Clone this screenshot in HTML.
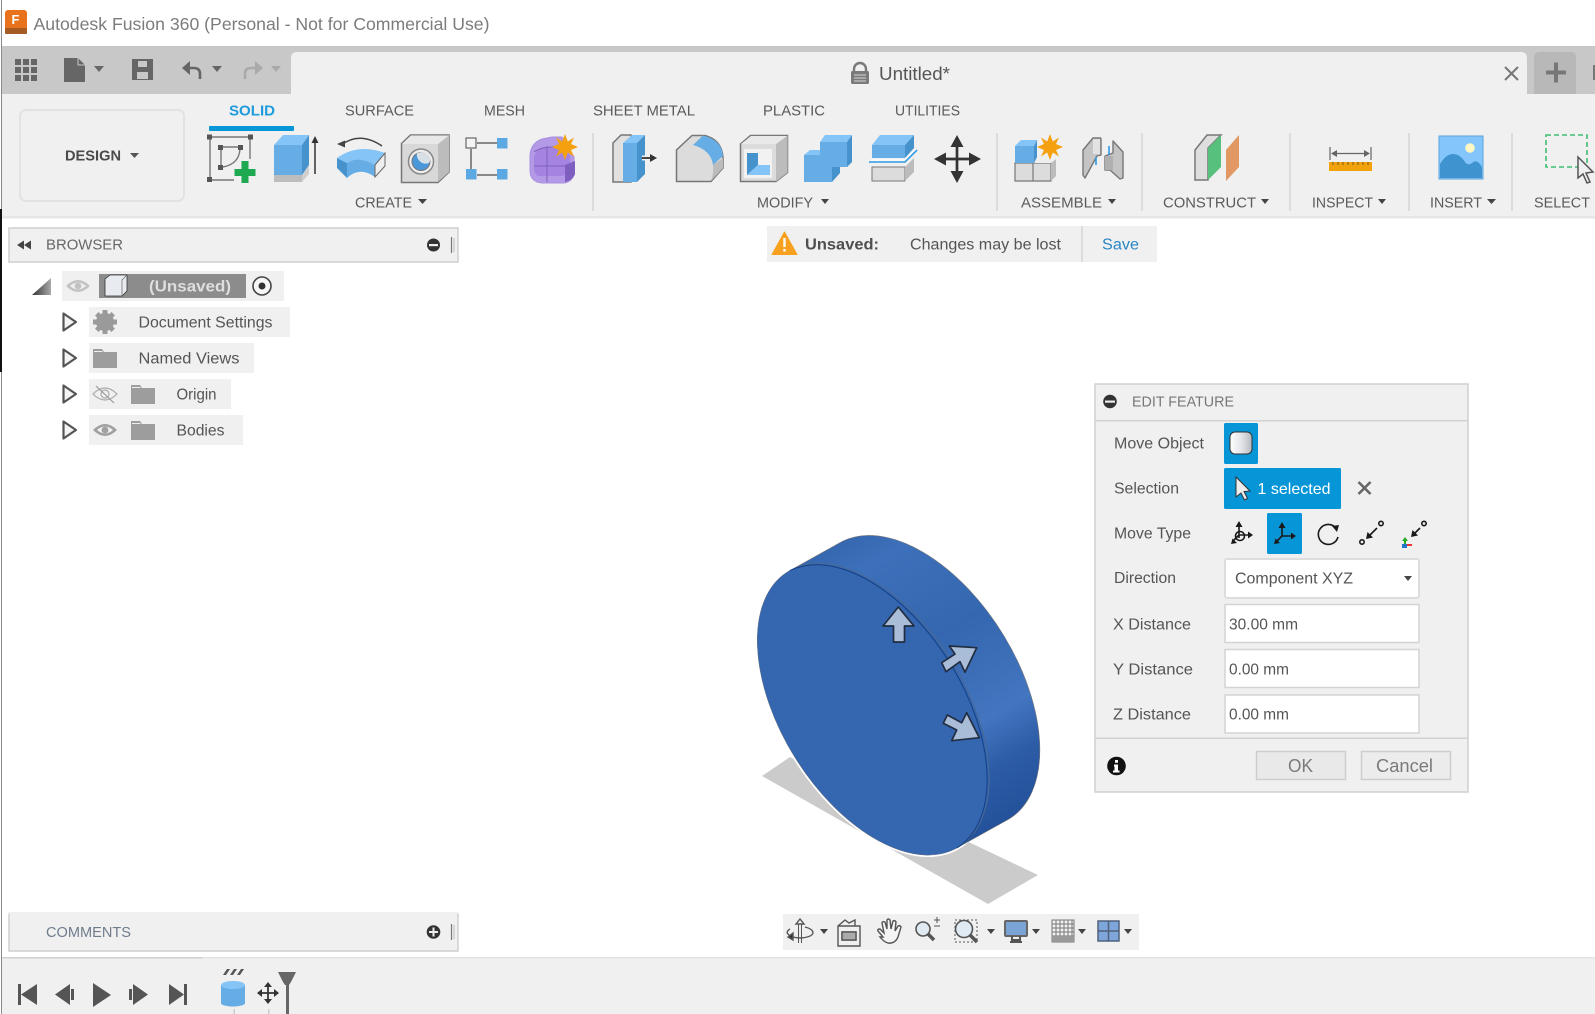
<!DOCTYPE html>
<html><head><meta charset="utf-8"><title>Autodesk Fusion 360</title>
<style>
html,body{margin:0;padding:0;background:#fff;width:1595px;height:1014px;overflow:hidden}
svg{display:block;filter:blur(.35px)}
text{font-family:"Liberation Sans",sans-serif;fill:#555;font-size:15px}
.r{font-size:15px;fill:#5a5a5a}
.l{font-size:15.5px;fill:#555}
</style></head><body>
<svg width="1595" height="1014" viewBox="0 0 1595 1014" xmlns="http://www.w3.org/2000/svg">
<defs>
<linearGradient id="side" gradientUnits="userSpaceOnUse" x1="845" y1="541" x2="1006" y2="820">
<stop offset="0" stop-color="#3568b0"/><stop offset=".1" stop-color="#3d70ba"/><stop offset=".4" stop-color="#3467af"/><stop offset=".7" stop-color="#4375c0"/><stop offset=".84" stop-color="#2d5ca6"/><stop offset="1" stop-color="#23529b"/>
</linearGradient>
<linearGradient id="cyl" x1="0" y1="0" x2="1" y2="0"><stop offset="0" stop-color="#fff"/><stop offset=".5" stop-color="#e4e6ea"/><stop offset="1" stop-color="#b5b9c0"/></linearGradient>
<linearGradient id="tri" x1="0" y1="0" x2="1" y2="0"><stop offset="0" stop-color="#333"/><stop offset="1" stop-color="#aaa"/></linearGradient>
<g id="folder"><path d="M0,1h9l2,3h13v16H0z" fill="#9d9d9d"/><path d="M1,3h8l1,1H1z" fill="#eee"/></g>
<g id="eye"><path d="M0,9Q12,-3 24,9Q12,21 0,9z" fill="#a0a0a0"/><path d="M4,9Q12,2 20,9Q12,16 4,9z" fill="#f0f0f0"/><circle cx="12" cy="9" r="3.4" fill="#a0a0a0"/></g>
<path id="tr" d="M1.5,1.5L14,10L1.5,18.5z" fill="#f4f4f4" stroke="#555" stroke-width="2.2" stroke-linejoin="round"/>
<path id="star" d="M0,-13L2.8,-5.5L9,-9.5L6,-3L13,0L6,3L9,9.5L2.8,5.5L0,13L-2.8,5.5L-9,9.5L-6,3L-13,0L-6,-3L-9,-9.5L-2.8,-5.5z" fill="#f5a00f"/>
</defs>
<rect width="1595" height="1014" fill="#fff"/>

<!-- title -->
<rect x="5" y="10" width="22" height="24" rx="3" fill="#e9721c"/>
<rect x="5" y="28" width="22" height="6" rx="1" fill="#a65a24"/>
<text x="11.5" y="24" style="font-size:13px;font-weight:bold;fill:#fff">F</text>
<text x="33.5" y="30" textLength="456" lengthAdjust="spacingAndGlyphs" style="font-size:17.5px;fill:#7c7c7c">Autodesk Fusion 360 (Personal - Not for Commercial Use)</text>

<!-- top band -->
<rect x="2" y="46" width="1593" height="48" fill="#c8c8c8"/>
<path d="M2,94H1595V216H2z" fill="#f0f0f0"/>
<path d="M291,94V58q0-6 6-6H1521q6,0 6,6V94z" fill="#f0f0f0"/>
<path d="M1534,94V58q0-6 6-6h30q6,0 6,6V94z" fill="#b8b8b8"/>
<path d="M1593,65h2v15h-2z" fill="#777"/>
<path d="M1546,70.5h20v4h-20zM1554,62.5h4v20h-4z" fill="#777"/>
<path d="M1505,67L1518,80M1518,67L1505,80" stroke="#777" stroke-width="2"/>
<rect x="0" y="216" width="1595" height="2.5" fill="#e6e6e6"/>
<!-- left edge -->
<rect x="1" y="0" width="1" height="1014" fill="#8a8a8a"/>
<rect x="0" y="209" width="2" height="163" fill="#111"/>

<!-- quick access -->
<g fill="#666">
<path d="M15,59h6v6h-6zM23,59h6v6h-6zM31,59h6v6h-6zM15,67h6v6h-6zM23,67h6v6h-6zM31,67h6v6h-6zM15,75h6v6h-6zM23,75h6v6h-6zM31,75h6v6h-6z"/>
<path d="M64,58h14l7,7v17H64z"/>
<path d="M94,66h10l-5,6z"/>
<path fill-rule="evenodd" d="M132,59h21v21h-21zM138,61v6h9v-6zM137,72v7h11v-7z"/>
<path d="M212,66h10l-5,6z"/>
<path d="M271,66h10l-5,6z" fill="#aaa"/>
</g>
<path d="M78,58v7h7" fill="none" stroke="#c8c8c8" stroke-width="1"/>
<path d="M182,68l8-7v14z" fill="#666"/><path d="M189,68h5q6,0 6,6v5" fill="none" stroke="#666" stroke-width="2.6"/>
<path d="M263,68l-8-7v14z" fill="#aaa"/><path d="M256,68h-5q-6,0-6,6v5" fill="none" stroke="#aaa" stroke-width="2.6"/>

<!-- document -->
<path d="M854,72v-3a6,6 0 0 1 12,0v3" fill="none" stroke="#7a7a7a" stroke-width="2.4"/>
<rect x="851" y="71" width="18" height="13" rx="1.5" fill="#7a7a7a"/>
<path d="M854,75h12M854,78h12M854,81h12" stroke="#d8d8d8"/>
<text x="879" y="80" textLength="71" lengthAdjust="spacingAndGlyphs" style="font-size:18px;fill:#555">Untitled*</text>

<!-- design -->
<rect x="20" y="110" width="164" height="91" rx="6" fill="#f0f0f0" stroke="#e2e2e2" stroke-width="2"/>
<text x="65" y="160.500" textLength="56" lengthAdjust="spacingAndGlyphs" style="font-size:15px;font-weight:bold;fill:#4a4a4a">DESIGN</text>
<path d="M130,153h9l-4.500,5z" fill="#555"/>

<!-- tabs -->
<text x="229" y="115.500" textLength="46" lengthAdjust="spacingAndGlyphs" style="font-size:15px;fill:#1d9bdc;font-weight:bold">SOLID</text>
<rect x="209" y="126" width="85" height="5" rx="1" fill="#0696d7"/>
<text class="r" x="345" y="115.500" textLength="69" lengthAdjust="spacingAndGlyphs">SURFACE</text>
<text class="r" x="484" y="115.500" textLength="41" lengthAdjust="spacingAndGlyphs">MESH</text>
<text class="r" x="593" y="115.500" textLength="102" lengthAdjust="spacingAndGlyphs">SHEET METAL</text>
<text class="r" x="763" y="115.500" textLength="62" lengthAdjust="spacingAndGlyphs">PLASTIC</text>
<text class="r" x="895" y="115.500" textLength="65" lengthAdjust="spacingAndGlyphs">UTILITIES</text>

<!-- separators -->
<g fill="#dcdcdc"><rect x="592" y="133" width="2" height="78"/><rect x="996" y="133" width="2" height="78"/><rect x="1141" y="133" width="2" height="78"/><rect x="1289" y="133" width="2" height="78"/><rect x="1408" y="133" width="2" height="78"/><rect x="1511" y="133" width="2" height="78"/></g>

<!-- labels -->
<text class="r" x="355" y="207.500" textLength="57" lengthAdjust="spacingAndGlyphs">CREATE</text><path d="M418,199h9l-4.500,5z" fill="#444"/>
<text class="r" x="757" y="207.500" textLength="56" lengthAdjust="spacingAndGlyphs">MODIFY</text><path d="M821,199h8l-4,5z" fill="#444"/>
<text class="r" x="1021" y="207.500" textLength="81" lengthAdjust="spacingAndGlyphs">ASSEMBLE</text><path d="M1108,199h8l-4,5z" fill="#444"/>
<text class="r" x="1163" y="207.500" textLength="93" lengthAdjust="spacingAndGlyphs">CONSTRUCT</text><path d="M1261,199h8l-4,5z" fill="#444"/>
<text class="r" x="1312" y="207.500" textLength="61" lengthAdjust="spacingAndGlyphs">INSPECT</text><path d="M1378,199h8l-4,5z" fill="#444"/>
<text class="r" x="1430" y="207.500" textLength="52" lengthAdjust="spacingAndGlyphs">INSERT</text><path d="M1487,199h9l-4.500,5z" fill="#444"/>
<text class="r" x="1534" y="207.500" textLength="56" lengthAdjust="spacingAndGlyphs">SELECT</text>

<!-- sketch -->
<g>
<path d="M210,137h40M250,137v22M210,137v43M210,180h24M221,147h19M221,147v20M240,149q-1,15-17,18" fill="none" stroke="#777" stroke-width="1.400"/>
<path d="M207,134.500h5v5h-5zM248,134.500h5v5h-5zM207,177h5v5h-5zM218,145h5v5h-5zM238,145h5v5h-5zM218,165h5v5h-5z" fill="#555"/>
<path d="M241.500,161h7v8h7v7h-7v7h-7v-7h-7v-7h7z" fill="#1ea84f"/>
</g>
<!-- extrude -->
<path d="M274,145l9-10h26l-7,10z" fill="#84c4f7"/>
<path d="M274,145h28v30h-28z" fill="#65ade4"/>
<path d="M302,145l7-10v30l-7,10z" fill="#4592cd"/>
<path d="M274,175h28v7h-28z" fill="#bdbdbd"/><path d="M302,175l7-10v9l-7,8z" fill="#cfcfcf"/>
<path d="M315,140v34" stroke="#333" stroke-width="1.500"/><path d="M311.500,143l3.500-7 3.500,7z" fill="#333"/>
<!-- revolve -->
<path d="M341,145Q360,131 382,146" fill="none" stroke="#444" stroke-width="1.500"/><path d="M337,144l8-3.500 0,7z" fill="#444"/>
<path d="M337,158Q358,143 385,153L375,165Q358,155 347,163z" fill="#84c4f7"/>
<path d="M347,163Q358,155 375,165V177Q360,166 347,178z" fill="#65ade4"/>
<path d="M337,158l10,5v15L337,168z" fill="#4592cd"/>
<path d="M375,165l10-12v13l-10,11z" fill="#eee" stroke="#666"/>
<!-- hole -->
<path d="M401.500,143.500l9-8.500h38.500v37l-11,10.500h-36.500z" fill="#d8d8d8" stroke="#777" stroke-width="1.500"/>
<path d="M438,144l11-9v37l-11,10z" fill="#bcbcbc"/><path d="M402,144l9-8.500h38l-11,8.500z" fill="#e8e8e8"/>
<circle cx="421" cy="161.500" r="12.500" fill="#eee" stroke="#888" stroke-width="1.500"/>
<circle cx="421" cy="161.500" r="9" fill="#4a98d9" stroke="#777"/>
<path d="M417,153a9,9 0 0 0 12,10a9,9 0 0 0-2-12z" fill="#e8e8e8" opacity=".9"/>
<!-- pattern -->
<path d="M477,143h20M471,149v21M477,175h20" stroke="#666" stroke-width="1.500"/>
<rect x="466" y="138" width="10" height="10" fill="#f4f4f4" stroke="#666" stroke-width="1.200"/>
<rect x="497" y="138" width="10.500" height="10.500" fill="#5ba8e2"/><rect x="466" y="169" width="10.500" height="10.500" fill="#5ba8e2"/><rect x="497" y="169" width="10.500" height="10.500" fill="#5ba8e2"/>
<!-- create form -->
<path d="M530,155q1-12 12-16l10-2h10l12,20v17q-2,8-10,9h-22q-12-1-12-13z" fill="#b49ae6" stroke="#a98fe0"/>
<path d="M534,157q2-9 12-10h16l8,8v12q-2,9-10,9h-22q-4-2-4-8z" fill="#a484e0"/>
<path d="M565,165l10-4v13q-2,6-10,8z" fill="#7e5fc0"/><path d="M534,166h32M547,146v36M534,152q8-6 26-5" stroke="#7c62b8" stroke-width="1" fill="none"/>
<use href="#star" transform="translate(565,147)"/>
<!-- press pull -->
<path d="M613,182v-39l8-8h10v47z" fill="#e0e0e0" stroke="#777" stroke-width="1.500"/>
<path d="M623,143l9-8h13l-8,8z" fill="#84c4f7"/><path d="M623,143h14v39h-14z" fill="#65ade4"/><path d="M637,143l8-8v39l-8,8z" fill="#4592cd"/>
<path d="M642,158h10" stroke="#f0f0f0" stroke-width="5"/><path d="M642,158h10" stroke="#333" stroke-width="1.800"/><path d="M650,154l7,4-7,4z" fill="#333"/>
<!-- fillet -->
<path d="M676.500,181.500V150L692,135.500h13Q722,140 723,158V168L711,181.500Z" fill="#dcdcdc" stroke="#777" stroke-width="1.500"/>
<path d="M711,181l12-13v-10l-10,7q1,8-2,16z" fill="#bcbcbc"/>
<path d="M693,145L703,135.500Q722,140 723,156L713,165Q711,150 693,145Z" fill="#65ade4"/>
<!-- shell -->
<path d="M740.500,181.500V144l10-8.500h37v37l-11.500,9z" fill="#dcdcdc" stroke="#777" stroke-width="1.500"/>
<path d="M776,144l11.500-8.500v37l-11.500,9z" fill="#bcbcbc"/><path d="M741,144l10-8h36l-11,8z" fill="#e9e9e9"/>
<rect x="744" y="149" width="28" height="29" fill="#f2f2f2"/>
<path d="M747,153h11v12l-11,10z" fill="#4592cd"/><path d="M747,175l11-10h12v10z" fill="#84c4f7"/>
<!-- combine -->
<path d="M820,142l5-7h27l-5,7z" fill="#84c4f7"/><path d="M804,155l6-5h10v5z" fill="#84c4f7"/>
<path d="M804,155h16V142h27v25H832v15H804z" fill="#65ade4"/><path d="M847,142l5-7v27l-5,5zM832,167h8v6l-8,9z" fill="#4592cd"/>
<!-- split -->
<path d="M872,145l8-10h34l-9,10z" fill="#84c4f7"/><path d="M872,145h33v13h-33z" fill="#65ade4"/><path d="M905,145l9-10v13l-9,10z" fill="#4592cd"/>
<path d="M869,162h36l12-12" fill="none" stroke="#2f9be6" stroke-width="1.600"/><path d="M870,160h35l11-11" fill="none" stroke="#fff" stroke-width="1"/>
<path d="M872,167h33v14h-33z" fill="#dcdcdc" stroke="#777"/><path d="M905,167l9-9v14l-9,9z" fill="#bcbcbc"/>
<!-- move -->
<path d="M957,145v27M941,159h32" stroke="#333" stroke-width="2.700"/>
<path d="M957,135l6.500,12h-13zM957,183l6.500-12h-13zM934,159l12-6.500v13zM981,159l-12-6.500v13z" fill="#333"/>
<!-- assemble -->
<path d="M1015,181v-18h18v18zM1033,181v-18h18v18z" fill="#dcdcdc" stroke="#777" stroke-width="1.200"/>
<path d="M1051,163l5-4v17l-5,5z" fill="#bcbcbc"/><path d="M1034,163l6-4h16l-5,4z" fill="#eee"/>
<path d="M1015,146l6-6h16l-3,6z" fill="#84c4f7"/><path d="M1015,146h19v17h-19z" fill="#65ade4"/><path d="M1034,146l3-6v17l-3,6z" fill="#4592cd"/>
<use href="#star" transform="translate(1050,147)"/>
<!-- joint -->
<path d="M1083,150L1093,138h7q1,0 1,1V155l-4,1L1085,178l-2-3z" fill="#c4c4c4" stroke="#777" stroke-width="1.400" stroke-linejoin="round"/>
<path d="M1093,139h7v15h-7z" fill="#e2e2e2"/>
<path d="M1113,141l10,11v26l-3,1-10-9h-5v-14l8-3z" fill="#c4c4c4" stroke="#777" stroke-width="1.400" stroke-linejoin="round"/>
<path d="M1105,156h8v14h-8z" fill="#b0b0b0"/>
<path d="M1096,157v8M1109,146v9" stroke="#2f9be6" stroke-width="1.600"/>
<!-- construct -->
<path d="M1195,180v-30l12-15h14l-13,13v32z" fill="#dedede" stroke="#777" stroke-width="1.500"/>
<path d="M1208,180v-32l13-13v32z" fill="#56c07c"/><path d="M1226,181v-31l13-15v32z" fill="#e29862"/>
<!-- inspect -->
<path d="M1330,147v13M1371,147v13M1333,153.500h35" stroke="#666" stroke-width="1.200"/><path d="M1331,153.500l6-3.500v7zM1370,153.500l-6-3.500v7z" fill="#666"/>
<rect x="1329" y="162" width="43" height="9" fill="#f2a20c"/><path d="M1333,162v3M1338,162v3M1343,162v3M1348,162v3M1353,162v3M1358,162v3M1363,162v3M1368,162v3" stroke="#7a5a14"/>
<!-- insert -->
<rect x="1439" y="136" width="44" height="43" fill="#84c6fb" stroke="#5aa3dc"/>
<circle cx="1470" cy="148" r="4.800" fill="#fdf7c3"/>
<path d="M1440,164q6-10 13-10t12,8q3,4 7,1 5-5 10,4v11h-42z" fill="#3f94cf"/>
<!-- select -->
<rect x="1546" y="135" width="41" height="32" fill="none" stroke="#3fbf72" stroke-width="1.600" stroke-dasharray="5 3"/>
<path d="M1578,157v21l5-4 4,9 3-1-4-9 7-1z" fill="#f0f0f0" stroke="#555" stroke-width="1.500"/>

<!-- browser -->
<rect x="9" y="228" width="449" height="34" fill="#f0f0f0" stroke="#cfcfcf" stroke-width="1.500"/>
<path d="M24,245l-7,0 7-4.500zM24,245l7-4.500v9zM17,245l7,4.500v-4.500z" fill="#444"/>
<text x="46" y="249.500" textLength="77" lengthAdjust="spacingAndGlyphs" style="font-size:15px;fill:#666">BROWSER</text>
<circle cx="433.500" cy="245" r="6.500" fill="#333"/><rect x="429" y="244" width="9" height="2.200" fill="#eee"/>
<path d="M451.500,237v16" stroke="#777" stroke-width="1.200"/><path d="M454,238v14" stroke="#bbb"/>

<rect x="62" y="271" width="222" height="30" fill="#f0f0f0"/>
<path d="M32,295L51,278V295z" fill="url(#tri)"/>
<use href="#eye" transform="translate(66,277)" opacity=".55"/>
<rect x="99" y="274" width="147" height="24" fill="#8c8c8c"/>
<path d="M105,279l5-4h17v16l-5,5h-17z" fill="#e8ebf0" stroke="#333" stroke-width=".8"/>
<path d="M122,296v-16l5-5" fill="none" stroke="#666" stroke-width=".7"/>
<text x="149" y="291.500" textLength="82" lengthAdjust="spacingAndGlyphs" style="font-size:15.500px;font-weight:bold;fill:#dedede">(Unsaved)</text>
<circle cx="262" cy="286" r="9" fill="#f6f6f6" stroke="#444" stroke-width="1.600"/><circle cx="262" cy="286" r="3.500" fill="#333"/>

<rect x="89" y="307" width="201" height="30" fill="#f0f0f0"/>
<use href="#tr" transform="translate(62,312)"/>
<g transform="translate(105,322)"><path d="M-2.500,-12h5v24h-5zM-12,-2.500h24v5h-24zM-10,-6.500l3.500-3.500L10,6.500l-3.500,3.500zM-6.500,10l-3.500-3.500L6.500,-10l3.500,3.500z" fill="#9a9a9a"/><circle r="6.500" fill="none" stroke="#9a9a9a" stroke-width="5"/></g>
<text class="l" x="138.500" y="327.500" textLength="134" lengthAdjust="spacingAndGlyphs">Document Settings</text>

<rect x="89" y="343" width="165" height="30" fill="#f0f0f0"/>
<use href="#tr" transform="translate(62,348)"/>
<use href="#folder" transform="translate(93,348)"/>
<text class="l" x="138.500" y="363.500" textLength="101" lengthAdjust="spacingAndGlyphs">Named Views</text>

<rect x="89" y="379" width="142" height="30" fill="#f0f0f0"/>
<use href="#tr" transform="translate(62,384)"/>
<g transform="translate(93,385)" fill="none" stroke="#aaa" stroke-width="1.200"><path d="M0,9Q12,-3 24,9Q12,21 0,9z"/><circle cx="12" cy="9" r="4"/><path d="M3,1L21,18" stroke="#999"/></g>
<use href="#folder" transform="translate(131,384)"/>
<text class="l" x="176.500" y="399.500" textLength="40" lengthAdjust="spacingAndGlyphs">Origin</text>

<rect x="89" y="415" width="154" height="30" fill="#f0f0f0"/>
<use href="#tr" transform="translate(62,420)"/>
<use href="#eye" transform="translate(93,421)"/>
<use href="#folder" transform="translate(131,420)"/>
<text class="l" x="176.500" y="435.500" textLength="48" lengthAdjust="spacingAndGlyphs">Bodies</text>

<!-- banner -->
<rect x="767" y="226" width="390" height="36" fill="#f0f0f0"/>
<path d="M784.500,232L797,254.500H772z" fill="#f7a11f" stroke="#f7a11f" stroke-linejoin="round"/>
<path d="M783.300,238h2.400v9h-2.400zM783.300,249h2.400v2.500h-2.400z" fill="#fff"/>
<text x="805" y="249.500" textLength="74" lengthAdjust="spacingAndGlyphs" style="font-size:15.500px;font-weight:bold;fill:#4f4f4f">Unsaved:</text>
<text class="l" x="910" y="249.500" textLength="151" lengthAdjust="spacingAndGlyphs">Changes may be lost</text>
<rect x="1081" y="226" width="2" height="36" fill="#dcdcdc"/>
<text x="1102" y="249.500" textLength="37" lengthAdjust="spacingAndGlyphs" style="font-size:15.500px;fill:#2a87c6">Save</text>

<!-- model -->
<path d="M762,776L790,757L1038,875L988,904Z" fill="#cbcbcb"/>
<ellipse cx="873.300" cy="709.300" rx="164" ry="94" transform="rotate(58 873.300 709.300)" fill="#fff"/>
<path d="M789.800,570.600L842.500,541.300A162,92 58 0 1 1009.500,818.700L956.800,848Z" fill="url(#side)" stroke="#777" stroke-width=".6"/>
<ellipse cx="873.300" cy="709.300" rx="162" ry="92" transform="rotate(58 873.300 709.300)" fill="#3567b1" stroke="#5f6a7a" stroke-width=".5"/>
<path d="M789.800,570.600A162,92 58 0 1 956.800,848" fill="none" stroke="#123f85" stroke-width="1"/>
<g fill="#a9bcd8" stroke="#222e40" stroke-width="1.700" stroke-linejoin="round">
<path d="M898.300,607L914,626H904.500V642H893.500V626H883Z"/>
<path d="M976.700,647.700L965,672.300L960,661.700L946,671.700L941.700,662.700L955,654L949.300,646Z"/>
<path d="M979.300,737.700L951.700,740.700L956.700,730L943.300,723.300L947.300,715L961.700,722.700L966.700,712.700Z"/>
</g>

<!-- edit feature -->
<rect x="1095" y="384" width="373" height="408" fill="#f0f0f0" stroke="#cfcfcf" stroke-width="1.500"/>
<rect x="1095" y="420" width="373" height="1.500" fill="#d2d2d2"/>
<circle cx="1110" cy="401.500" r="6.800" fill="#333"/><rect x="1105" y="400.500" width="10" height="2.200" fill="#eee"/>
<text x="1132" y="406.500" textLength="102" lengthAdjust="spacingAndGlyphs" style="font-size:15px;fill:#777">EDIT FEATURE</text>
<text class="l" x="1114" y="448.500" textLength="90" lengthAdjust="spacingAndGlyphs">Move Object</text>
<rect x="1224" y="423" width="34" height="41" rx="1.500" fill="#0696d7"/>
<rect x="1230" y="432" width="22" height="22" rx="5" fill="url(#cyl)" stroke="#333" stroke-width="1"/>
<text class="l" x="1114" y="493.500" textLength="65" lengthAdjust="spacingAndGlyphs">Selection</text>
<rect x="1224" y="468" width="117" height="41" rx="1.500" fill="#0696d7"/>
<path d="M1236,477v20l5-4 3.500,7 3-1.500-3.500-7 6-.5z" fill="#eee" stroke="#333" stroke-width="1"/>
<text x="1257.500" y="494" textLength="73" lengthAdjust="spacingAndGlyphs" style="font-size:16px;fill:#fff">1 selected</text>
<path d="M1358.500,482L1370.500,494M1370.500,482L1358.500,494" stroke="#666" stroke-width="2.600"/>
<text class="l" x="1114" y="538.500" textLength="77" lengthAdjust="spacingAndGlyphs">Move Type</text>
<!-- move type icons -->
<rect x="1267" y="513" width="35" height="41" rx="1.500" fill="#0696d7"/>
<g fill="none" stroke="#1a1a1a" stroke-width="1.600">
<path d="M1239,526v12M1239,535h11M1239,535l-6,6"/><circle cx="1240" cy="536" r="4.500"/>
<path d="M1282,526v10M1282,536h11M1282,536l-6,6"/>
<path d="M1336,528a10,10 0 1 0 2,9"/>
<path d="M1377,528l-8,8"/><circle cx="1362" cy="542" r="2.200"/><circle cx="1381" cy="523.500" r="2.200"/>
<path d="M1420,528l-6,6"/><circle cx="1424" cy="523.500" r="2.200"/>
</g>
<g fill="#1a1a1a"><path d="M1239,521l-3.500,6h7zM1253,535l-5-3.500v7zM1231,544l6-1-4.500-4.500z"/>
<path d="M1282,522l-3.500,6h7zM1296,536l-5-3.500v7zM1274,544l6-1-4.500-4.500z"/>
<path d="M1339,525l-7,1 5,6z"/><path d="M1366,539l7-1.500-5.500-5.500z"/><path d="M1411,537l7-1.500-5.500-5.500z"/></g>
<path d="M1405,540v5" stroke="#2a2" stroke-width="2"/><path d="M1405,537l-3,4h6z" fill="#2a2"/><path d="M1405,545h7" stroke="#e33" stroke-width="2"/><path d="M1402,544h5v4h-5z" fill="#27c"/>

<text class="l" x="1114" y="583" textLength="62" lengthAdjust="spacingAndGlyphs">Direction</text>
<rect x="1225" y="559" width="194" height="39" rx="2" fill="#fff" stroke="#ddd" stroke-width="2"/>
<text class="l" x="1235" y="583.500" textLength="118" lengthAdjust="spacingAndGlyphs">Component XYZ</text>
<path d="M1404,576h8l-4,5z" fill="#444"/>
<rect x="1225" y="604.500" width="194" height="38" fill="#fff" stroke="#d4d4d4" stroke-width="1.500"/>
<rect x="1225" y="649.500" width="194" height="38" fill="#fff" stroke="#d4d4d4" stroke-width="1.500"/>
<rect x="1225" y="695" width="194" height="38" fill="#fff" stroke="#d4d4d4" stroke-width="1.500"/>
<text class="l" x="1113" y="629.500" textLength="78" lengthAdjust="spacingAndGlyphs">X Distance</text>
<text class="l" x="1113" y="674.500" textLength="80" lengthAdjust="spacingAndGlyphs">Y Distance</text>
<text class="l" x="1113" y="719.500" textLength="78" lengthAdjust="spacingAndGlyphs">Z Distance</text>
<text class="l" x="1229" y="629.500" textLength="69" lengthAdjust="spacingAndGlyphs">30.00 mm</text>
<text class="l" x="1229" y="674.500" textLength="60" lengthAdjust="spacingAndGlyphs">0.00 mm</text>
<text class="l" x="1229" y="719.500" textLength="60" lengthAdjust="spacingAndGlyphs">0.00 mm</text>
<rect x="1095" y="737.500" width="373" height="1.500" fill="#d2d2d2"/>
<circle cx="1116.500" cy="766" r="9.300" fill="#111"/>
<path d="M1115,760h3v2.800h-3zM1114,764.500h4v6h1.500v2h-6.500v-2h1.500v-4h-.5z" fill="#fff"/>
<rect x="1256.500" y="751.500" width="89" height="28" fill="#e9e9e9" stroke="#cdcdcd" stroke-width="1.500"/>
<rect x="1361.500" y="751.500" width="89" height="28" fill="#ececec" stroke="#cdcdcd" stroke-width="1.500"/>
<text x="1288" y="772" textLength="25" lengthAdjust="spacingAndGlyphs" style="font-size:18px;fill:#7a7a7a">OK</text>
<text x="1376" y="772" textLength="57" lengthAdjust="spacingAndGlyphs" style="font-size:18px;fill:#7a7a7a">Cancel</text>

<!-- comments -->
<rect x="9" y="913" width="449" height="38" fill="#f0f0f0" stroke="#cfcfcf" stroke-width="1.500"/>
<rect x="8" y="912" width="451" height="2" fill="#f0f0f0"/>
<text x="46" y="937" textLength="85" lengthAdjust="spacingAndGlyphs" style="font-size:15px;fill:#6f7c8c">COMMENTS</text>
<circle cx="433.500" cy="932" r="6.800" fill="#333"/><path d="M429,931h9v2h-9zM432.500,927.500h2v9h-2z" fill="#eee"/>
<path d="M451.500,924v16" stroke="#777" stroke-width="1.200"/><path d="M454,925v14" stroke="#bbb"/>

<!-- nav bar -->
<rect x="783" y="914" width="356" height="36" fill="#f0f0f0"/>
<g stroke="#555" fill="none" stroke-width="1.400">
<path d="M800,921v22" stroke-width="4"/><path d="M800,921v22" stroke="#eee" stroke-width="2"/><path d="M796,924l4-5 4,5z" fill="#eee"/>
<path d="M790,929q-5,3-1,6 4,3 12,3 11-1 12-5 0-4-8-6"/><path d="M793,933l-5,4 5,3z" fill="#333"/>
<path d="M838,926h22v20h-22zM838,926l7-6 4,3 6-3v6M842,932h14v8h-14z"/><rect x="842" y="932" width="14" height="8" fill="#aaa"/>
<path d="M883,937l-5-6q-1-2 2-2l4,4-2-10q0-2 3-1l2,7-0-9q1-2 3,0l1,9 2-8q2-1 3,1l-1,9 3-5q2-1 3,1l-3,10q-3,7-10,6-4-1-8-6z" fill="#f4f4f4"/>
<circle cx="923" cy="929" r="7" fill="#dfeaf2" stroke-width="1.600"/><path d="M928,934l6,6" stroke-width="3.500"/><path d="M934,920h6M937,917v6M934,926h6" stroke-width="1"/>
<rect x="955" y="920" width="22" height="22" stroke-dasharray="2 2" stroke-width="1"/>
<circle cx="964" cy="929" r="8.500" fill="#dfeaf2" stroke-width="1.600"/><path d="M970,935l7,7" stroke-width="3.500"/>
<rect x="1005" y="921" width="22" height="15" rx="1" fill="#7aa3d6" stroke-width="2" stroke="#666"/><path d="M1012,936v4h8v-4M1010,942h12" stroke-width="2"/>
<path d="M1052,920h22v22h-22zM1056,920v22M1060,920v22M1064,920v22M1068,920v22M1072,920v22M1052,924h22M1052,928h22M1052,932h22M1052,936h22" stroke="#777" stroke-width="1"/>
<rect x="1052" y="936" width="22" height="6" fill="#999" stroke="none"/>
<path d="M1098,921h21v20h-21zM1108.500,921v20M1098,931h21" fill="#7fa6da" stroke="#50607a" stroke-width="1.500"/>
</g>
<g fill="#444"><path d="M820,929h8l-4,5zM987,929h8l-4,5zM1032,929h8l-4,5zM1078,929h8l-4,5zM1124,929h8l-4,5z"/></g>

<!-- timeline -->
<rect x="2" y="958" width="1593" height="56" fill="#f0f0f0"/>
<rect x="2" y="957" width="200" height="1.500" fill="#cfcfcf"/><rect x="202" y="957" width="1393" height="1.500" fill="#e4e4e4"/>
<g fill="#555">
<path d="M18,984h3v21h-3zM37,984v21L21,994.500z"/>
<path d="M55,994.500L70,984v21zM71,989h3v11h-3z"/>
<path d="M93,983L111,995L93,1007z"/>
<path d="M148,994.500L133,984v21zM129,989h3v11h-3z"/>
<path d="M169,984v21l15-10.500zM184,984h3v21h-3z"/>
<path d="M223,975l4-6h3l-4,6zM230,975l4-6h3l-4,6zM237,975l4-6h3l-4,6z"/>
</g>
<rect x="221" y="985" width="24" height="19" fill="#65ade4"/><ellipse cx="233" cy="985" rx="12" ry="4" fill="#84c4f7"/><ellipse cx="233" cy="1003" rx="12" ry="3.500" fill="#65ade4"/>
<path d="M268,984v18M259,993h18" stroke="#333" stroke-width="1.800"/><path d="M268,982l4,5h-8zM268,1004l4-5h-8zM257,993l5-4v8zM279,993l-5-4v8z" fill="#333"/>
<path d="M278,972h18l-5,10-2,3h-4l-2-3z" fill="#666"/><rect x="286" y="984" width="3" height="30" fill="#666"/>
<rect x="233.500" y="1009" width="1.500" height="5" fill="#ccc"/><rect x="268" y="1009" width="1.500" height="5" fill="#ccc"/>
</svg>
</body></html>
